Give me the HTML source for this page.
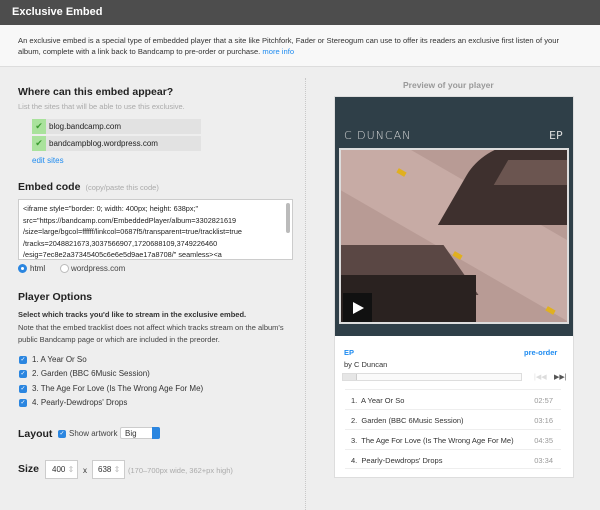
<!DOCTYPE html>
<html><head><style>
*{margin:0;padding:0;box-sizing:border-box}
body{width:600px;height:510px;background:#eeeeee;font-family:"Liberation Sans",sans-serif;color:#333;position:relative;overflow:hidden;font-size:8px}
.a{position:absolute;white-space:nowrap}
.hdr{position:absolute;left:0;top:0;width:600px;height:25px;background:#4d4d4d;color:#fff;font-weight:bold;font-size:11px;padding:6px 12px}
.desc{position:absolute;left:0;top:25px;width:600px;height:42px;background:#f8f8f8;border-bottom:1px solid #ddd;padding:10px 18px 0;font-size:7.6px;line-height:11px;color:#333}
.blue{color:#1e8bf0}
h2{font-size:10.5px;font-weight:bold;color:#222}
.site{position:absolute;left:32px;width:169px;height:15px;background:#e2e2e2}
.site .ck{position:absolute;left:0;top:0;width:14px;height:15px;background:#a9e29c;color:#3a9a2f;font-size:9px;text-align:center;line-height:15px}
.site span{position:absolute;left:17px;top:3px;font-size:8px;color:#222}
.ta{position:absolute;left:18px;top:199px;width:275px;height:61px;background:#fff;border:1px solid #ccc;padding:3px 4px;font-size:7.3px;line-height:11.6px;color:#222;overflow:hidden;white-space:nowrap}
.sb{position:absolute;right:2px;top:3px;width:4px;height:30px;background:#bbb;border-radius:2px}
.cb{position:absolute;left:19px;width:8px;height:8px;background:#2b86e0;border-radius:2px;color:#fff;font-size:6px;line-height:8px;text-align:center}
.trk{position:absolute;left:32px;font-size:8px;color:#333}
.box{position:absolute;background:#fff;border:1px solid #ccc;height:19px}
.dots{position:absolute;left:305px;top:78px;height:432px;border-left:1px dotted #c8c8c8}
.pl{position:absolute;left:334px;top:96px;width:240px;height:382px;background:#fff;border:1px solid #ddd}
.dark{position:absolute;left:0;top:0;width:238px;height:239px;background:#2f3f48}
.art{position:absolute;left:4px;top:51px;width:230px;height:176px;border:2px solid #ddd;overflow:hidden;background:#b89b95}
.row{position:absolute;left:10px;width:216px;height:20px;border-top:1px solid #eee;font-size:7.5px;color:#333;padding:6px 0 0 6px}
.row b{font-weight:normal;position:absolute;right:8px;top:6px;color:#999}
.car{position:absolute;width:9px;height:5px;background:#e0b020;transform:rotate(30deg)}
</style></head><body>
<div class="hdr">Exclusive Embed</div>
<div class="desc">An exclusive embed is a special type of embedded player that a site like Pitchfork, Fader or Stereogum can use to offer its readers an exclusive first listen of your<br>album, complete with a link back to Bandcamp to pre-order or purchase. <span class="blue">more info</span></div>
<div class="dots"></div>
<h2 class="a" style="left:18px;top:86px">Where can this embed appear?</h2>
<div class="a" style="left:18px;top:102px;color:#aaa;font-size:7.5px">List the sites that will be able to use this exclusive.</div>
<div class="site" style="top:119px"><div class="ck">✔</div><span>blog.bandcamp.com</span></div>
<div class="site" style="top:136px"><div class="ck">✔</div><span>bandcampblog.wordpress.com</span></div>
<div class="a blue" style="left:32px;top:156px">edit sites</div>
<h2 class="a" style="left:18px;top:181px">Embed code <span style="font-weight:normal;font-size:7.5px;color:#aaa">&nbsp;(copy/paste this code)</span></h2>
<div class="ta">&lt;iframe style="border: 0; width: 400px; height: 638px;"<br>src="https://bandcamp.com/EmbeddedPlayer/album=3302821619<br>/size=large/bgcol=ffffff/linkcol=0687f5/transparent=true/tracklist=true<br>/tracks=2048821673,3037566907,1720688109,3749226460<br>/esig=7ec8e2a37345405c6e6e5d9ae17a8708/" seamless&gt;&lt;a<div class="sb"></div></div>
<div class="a" style="left:18px;top:264px;width:9px;height:9px;border-radius:50%;background:#2b86e0;border:3px solid #2b86e0"><div style="width:3px;height:3px;background:#fff;border-radius:50%"></div></div>
<div class="a" style="left:30px;top:264px">html</div>
<div class="a" style="left:60px;top:264px;width:9px;height:9px;border-radius:50%;background:#fff;border:1px solid #bbb"></div>
<div class="a" style="left:71px;top:264px;color:#444">wordpress.com</div>
<h2 class="a" style="left:18px;top:291px">Player Options</h2>
<div class="a" style="left:18px;top:310px;font-weight:bold;font-size:7.5px">Select which tracks you'd like to stream in the exclusive embed.</div>
<div class="a" style="left:18px;top:322px;font-size:7.5px;line-height:12px;color:#444">Note that the embed tracklist does not affect which tracks stream on the album's<br>public Bandcamp page or which are included in the preorder.</div>
<div class="cb" style="top:356px">✓</div><div class="trk" style="top:355px">1. A Year Or So</div>
<div class="cb" style="top:370px">✓</div><div class="trk" style="top:369px">2. Garden (BBC 6Music Session)</div>
<div class="cb" style="top:385px">✓</div><div class="trk" style="top:384px">3. The Age For Love (Is The Wrong Age For Me)</div>
<div class="cb" style="top:399px">✓</div><div class="trk" style="top:398px">4. Pearly-Dewdrops' Drops</div>
<h2 class="a" style="left:18px;top:428px">Layout</h2>
<div class="cb" style="left:58px;top:430px">✓</div>
<div class="a" style="left:69px;top:429px;color:#444">Show artwork</div>
<div class="a" style="left:120px;top:427px;width:40px;height:12px;background:#fff;border:1px solid #ccc;border-radius:2px;padding:1px 4px">Big<div style="position:absolute;right:-1px;top:-1px;width:8px;height:12px;background:#2b86e0;border-radius:0 2px 2px 0"></div></div>
<h2 class="a" style="left:18px;top:463px">Size</h2>
<div class="box" style="left:45px;top:460px;width:33px;padding:4px 0 0 6px">400 <span style="color:#bbb">⇕</span></div>
<div class="a" style="left:83px;top:466px">x</div>
<div class="box" style="left:92px;top:460px;width:33px;padding:4px 0 0 5px">638 <span style="color:#bbb">⇕</span></div>
<div class="a" style="left:128px;top:466px;color:#aaa;font-size:7.5px">(170–700px wide, 362+px high)</div>
<div class="a" style="left:403px;top:80px;color:#999;font-weight:bold;font-size:8.5px">Preview of your player</div>
<div class="pl">
<div class="dark">
<div class="a" style="left:9px;top:32px;color:#ddd;font-size:11px;letter-spacing:1px;font-family:'DejaVu Sans',sans-serif;font-weight:200">C DUNCAN</div>
<div class="a" style="left:214px;top:32px;color:#ddd;font-size:11px;font-family:'DejaVu Sans',sans-serif">EP</div>
<div class="art">
<div style="position:absolute;left:-60px;top:40px;width:380px;height:70px;background:#c7aba5;transform:rotate(30deg)"></div>
<div style="position:absolute;left:120px;top:-5px;width:150px;height:80px;background:#3e302e;transform:skewX(-30deg);border-radius:30px 0 0 0"></div>
<div style="position:absolute;left:160px;top:10px;width:80px;height:25px;background:#6b5550;transform:skewX(-30deg)"></div>
<div style="position:absolute;left:-30px;top:95px;width:150px;height:50px;background:#5a4744;transform:skewX(35deg)"></div>
<div style="position:absolute;left:0;top:125px;width:135px;height:55px;background:#2a2220"></div>
<div class="car" style="left:56px;top:20px"></div>
<div class="car" style="left:112px;top:103px"></div>
<div class="car" style="left:205px;top:158px"></div>
<div style="position:absolute;left:2px;top:143px;width:29px;height:30px;background:#111"><div style="margin:9px 0 0 10px;width:0;height:0;border-left:11px solid #fff;border-top:6px solid transparent;border-bottom:6px solid transparent"></div></div>
</div>
</div>
<div class="a" style="left:9px;top:251px;color:#1e8bf0;font-weight:bold;font-size:7.5px">EP</div>
<div class="a" style="left:189px;top:251px;color:#1e8bf0;font-weight:bold;font-size:7.5px">pre-order</div>
<div class="a" style="left:9px;top:263px;font-size:7.5px">by C Duncan</div>
<div class="a" style="left:7px;top:276px;width:180px;height:8px;border:1px solid #ddd;background:#fafafa"><div style="width:14px;height:6px;background:#e6e6e6;border-right:1px solid #ccc"></div></div>
<div class="a" style="left:199px;top:276px;color:#ddd;font-size:7px">|◀◀</div>
<div class="a" style="left:219px;top:276px;color:#555;font-size:7px">▶▶|</div>
<div class="row" style="top:292px">1.&nbsp; A Year Or So<b>02:57</b></div>
<div class="row" style="top:312px">2.&nbsp; Garden (BBC 6Music Session)<b>03:16</b></div>
<div class="row" style="top:332px">3.&nbsp; The Age For Love (Is The Wrong Age For Me)<b>04:35</b></div>
<div class="row" style="top:352px;border-bottom:1px solid #eee">4.&nbsp; Pearly-Dewdrops' Drops<b>03:34</b></div>
</div>
</body></html>
